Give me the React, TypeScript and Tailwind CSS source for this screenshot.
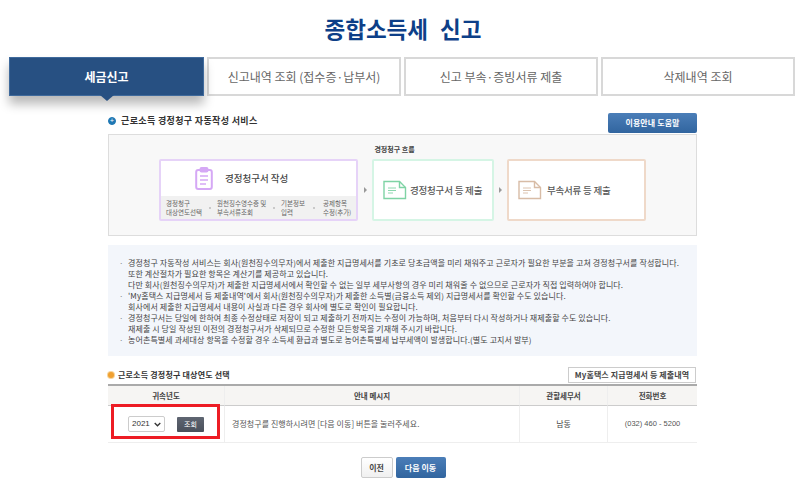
import React from "react";

const KR = "font-['Noto_Sans_CJK_KR','Liberation_Sans',sans-serif]";

function Tab({ label, active, w }: { label: string; active?: boolean; w: string }) {
  if (active) {
    return (
      <div className={`relative ${w} h-[39px] flex items-center justify-center bg-[#275082] border border-[#3f6a9c] text-white text-[12px] font-bold shadow-[0_8px_10px_rgba(0,0,0,0.28)]`}>
        {label}
        <div className="absolute left-1/2 -translate-x-1/2 top-full w-0 h-0 border-l-[7px] border-r-[7px] border-t-[6px] border-l-transparent border-r-transparent border-t-[#275082]" />
      </div>
    );
  }
  return (
    <div className={`${w} h-[39px] flex items-center justify-center bg-white border-2 border-[#d8d8d8] text-[#666] text-[12px]`}>
      {label}
    </div>
  );
}

function DocIcon({ color }: { color: string }) {
  return (
    <svg width="24" height="20" viewBox="0 0 24 20" fill="none" stroke={color} strokeWidth="1.4">
      <path d="M1 1.5h15.5l6 6V18.5H1z" />
      <path d="M16.5 1.5v6h6" />
      <path d="M5 8h8M5 10.5h8M5 13h5" strokeWidth="0.9" />
    </svg>
  );
}

function ClipIcon() {
  return (
    <svg width="18" height="23" viewBox="0 0 18 23" fill="none" stroke="#d5a8f5" strokeWidth="2">
      <rect x="1.2" y="3" width="15.6" height="19" rx="2" />
      <rect x="5.5" y="1" width="7" height="3.4" rx="1" fill="#d5a8f5" />
      <path d="M5 9h8M5 13h8M5 17h6" strokeWidth="1.4" />
    </svg>
  );
}

function Arrow() {
  return <div className="w-0 h-0 border-l-[3px] border-t-[3px] border-b-[3px] border-l-[#999] border-t-transparent border-b-transparent" />;
}

function SmallDot() {
  return <div className="w-[2px] h-[2px] bg-[#bbb] rounded-full shrink-0" />;
}

const notes: { b?: boolean; t: string }[] = [
  { b: true, t: "경정청구 자동작성 서비스는 회사(원천징수의무자)에서 제출한 지급명세서를 기초로 당초금액을 미리 채워주고 근로자가 필요한 부분을 고쳐 경정청구서를 작성합니다." },
  { t: "또한 계산절차가 필요한 항목은 계산기를 제공하고 있습니다." },
  { t: "다만 회사(원천징수의무자)가 제출한 지급명세서에서 확인할 수 없는 일부 세부사항의 경우 미리 채워줄 수 없으므로 근로자가 직접 입력하여야 합니다." },
  { b: true, t: "'My홈택스 지급명세서 등 제출내역'에서 회사(원천징수의무자)가 제출한 소득별(금융소득 제외) 지급명세서를 확인할 수도 있습니다." },
  { t: "회사에서 제출한 지급명세서 내용이 사실과 다른 경우 회사에 별도로 확인이 필요합니다." },
  { b: true, t: "경정청구서는 당일에 한하여 최종 수정상태로 저장이 되고 제출하기 전까지는 수정이 가능하며, 처음부터 다시 작성하거나 재제출할 수도 있습니다." },
  { t: "재제출 시 당일 작성된 이전의 경정청구서가 삭제되므로 수정한 모든항목을 기재해 주시기 바랍니다." },
  { b: true, t: "농어촌특별세 과세대상 항목을 수정할 경우 소득세 환급과 별도로 농어촌특별세 납부세액이 발생합니다.(별도 고지서 발부)" },
];

export default function App() {
  return (
    <div className={`w-[800px] h-[490px] bg-white overflow-hidden ${KR}`}>
      <div className="h-[57px] pl-[6px] flex items-center justify-center text-[22.5px] font-bold text-[#0d3f88] [word-spacing:7px]">
        종합소득세 신고
      </div>

      <div className="flex ml-[9px] gap-[3px]">
        <Tab label="세금신고" active w="w-[195px]" />
        <Tab label="신고내역 조회 (접수증·납부서)" w="w-[194px]" />
        <Tab label="신고 부속·증빙서류 제출" w="w-[194px]" />
        <Tab label="삭제내역 조회" w="w-[194px]" />
      </div>

      <div className="relative z-10 ml-[108px] w-[589px]">
        <div className="flex items-center justify-between h-[38px]">
          <div className="flex items-center gap-[5px] pt-[11px]">
            <div className="w-[8px] h-[8px] rounded-full bg-[#1f78b4] border border-[#1f78b4] flex items-center justify-center text-white text-[7px] leading-none">+</div>
            <span className="text-[9px] font-bold text-[#333] tracking-[0.35px]">근로소득 경정청구 자동작성 서비스</span>
          </div>
          <div className="mt-[15px] w-[89px] h-[20px] rounded-[2px] bg-gradient-to-b from-[#4b7eb8] to-[#31659f] text-white text-[8px] tracking-[0.1px] font-bold flex items-center justify-center">
            이용안내 도움말
          </div>
        </div>

        <div className="h-[102px] bg-[#f8f8f8] border border-[#ddd] flex flex-col items-center">
          <div className="h-[24px] pt-[9px] text-[7px] font-bold text-[#444] leading-[10px] pr-[16px]">경정청구 흐름</div>
          <div className="flex items-center">
            <div className="w-[199px] h-[62px] bg-white border-2 border-[#e6d3f8] rounded-[2px] flex flex-col">
              <div className="h-[35px] flex items-center pl-[34px] gap-[12px]">
                <ClipIcon />
                <span className="text-[9.5px] font-medium text-[#444]">경정청구서 작성</span>
              </div>
              <div className="flex-1 bg-[#f1f1f1] flex items-center pl-[5px] text-[6.5px] leading-[9px] text-[#666]">
                <div className="w-[40px]">경정청구<br />대상연도선택</div>
                <div className="mx-[3px]"><SmallDot /></div>
                <div className="w-[54px] ml-[3px]">원천징수영수증 및<br />부속서류조회</div>
                <div className="mx-[2px]"><SmallDot /></div>
                <div className="w-[30px] ml-[4px]">기본정보<br />입력</div>
                <div className="mx-[2px]"><SmallDot /></div>
                <div className="ml-[6px]">공제항목<br />수정(추가)</div>
              </div>
            </div>
            <div className="w-[14px] flex justify-center"><Arrow /></div>
            <div className="w-[122px] h-[62px] bg-white border-2 border-[#d5f5e5] rounded-[2px] flex items-center pl-[9px] gap-[3px]">
              <DocIcon color="#7fd3a5" />
              <span className="text-[9.5px] font-medium text-[#555] tracking-[-0.2px]">경정청구서 등 제출</span>
            </div>
            <div className="w-[13px] flex justify-center"><Arrow /></div>
            <div className="w-[139px] h-[62px] bg-white border-2 border-[#efd9c9] rounded-[2px] flex items-center pl-[9px] gap-[5px]">
              <DocIcon color="#d8bca6" />
              <span className="text-[9.5px] font-medium text-[#555] tracking-[-0.2px]">부속서류 등 제출</span>
            </div>
          </div>
        </div>

        <div className="mt-[9px] h-[111px] bg-[#f3f6fb] pt-[12px] pl-[11px] text-[8px] tracking-[0.1px] leading-[11px] text-[#444]">
          {notes.map((n, i) => (
            <div key={i} className="flex whitespace-nowrap">
              <span className="w-[9px] text-[#888]">{n.b ? "·" : ""}</span>
              <span>{n.t}</span>
            </div>
          ))}
        </div>

        <div className="flex items-center justify-between h-[28px] pt-[9px]">
          <div className="flex items-center gap-[3px]">
            <div className="w-[6px] h-[6px] rounded-full bg-[#f0a030] ring-1 ring-[#f7d49a]" />
            <span className="text-[8px] tracking-[0.2px] font-bold text-[#333] ml-[1px]">근로소득 경정청구 대상연도 선택</span>
          </div>
          <div className="w-[128px] h-[16px] mr-[1px] border border-[#ccc] bg-white text-[8px] tracking-[0.1px] font-bold text-[#444] flex items-center justify-center">
            My홈택스 지급명세서 등 제출내역
          </div>
        </div>

        <div className="relative">
          <div className="border-t-2 border-[#aaa] grid grid-cols-[117px_295px_88px_89px] text-[7.5px] text-[#444]">
            <div className="h-[20px] bg-[#f6f5f3] border-b border-[#ccc] border-r border-r-[#eee] flex items-center justify-center font-bold">귀속년도</div>
            <div className="h-[20px] bg-[#f6f5f3] border-b border-[#ccc] border-r border-r-[#eee] flex items-center justify-center font-bold">안내 메시지</div>
            <div className="h-[20px] bg-[#f6f5f3] border-b border-[#ccc] border-r border-r-[#eee] flex items-center justify-center font-bold">관할세무서</div>
            <div className="h-[20px] bg-[#f6f5f3] border-b border-[#ccc] flex items-center justify-center font-bold">전화번호</div>

            <div className="h-[37px] border-b border-[#eee] border-r border-r-[#eee] flex items-center pl-[20px] gap-[12px]">
              <div className="w-[37px] h-[16px] border border-[#ccc] rounded-[2px] bg-white flex items-center justify-between px-[3px] text-[8px] text-[#333] font-['Liberation_Sans',sans-serif]">
                2021
                <svg width="7" height="5" viewBox="0 0 7 5" fill="none" stroke="#333" strokeWidth="1.3"><path d="M.7 1l2.8 2.8L6.3 1" /></svg>
              </div>
              <div className="w-[27px] h-[15px] rounded-[1px] bg-gradient-to-b from-[#5f6672] to-[#4a505b] text-white text-[7px] flex items-center justify-center">조회</div>
            </div>
            <div className="h-[37px] border-b border-[#eee] border-r border-r-[#eee] flex items-center pl-[7px] text-[8px] tracking-[0.05px] text-[#555]">
              경정청구를 진행하시려면 [다음 이동] 버튼을 눌러주세요.
            </div>
            <div className="h-[37px] border-b border-[#eee] border-r border-r-[#eee] flex items-center justify-center text-[8px]">남동</div>
            <div className="h-[37px] border-b border-[#eee] flex items-center justify-center text-[#555] font-['Liberation_Sans',sans-serif]">(032) 460 - 5200</div>
          </div>
          <div className="absolute left-[3px] top-[20px] w-[109px] h-[35px] border-[3px] border-[#ed1c24] pointer-events-none" />
        </div>

        <div className="flex justify-center gap-[3px] mt-[14px] pl-[1px]">
          <div className="w-[32px] h-[21px] border border-[#ccc] rounded-[2px] bg-gradient-to-b from-white to-[#f0f0f0] text-[8px] font-bold text-[#444] flex items-center justify-center">이전</div>
          <div className="w-[50px] h-[21px] rounded-[2px] bg-gradient-to-b from-[#4b7eb8] to-[#31659f] text-[8px] font-bold text-white flex items-center justify-center">다음 이동</div>
        </div>
      </div>
    </div>
  );
}
